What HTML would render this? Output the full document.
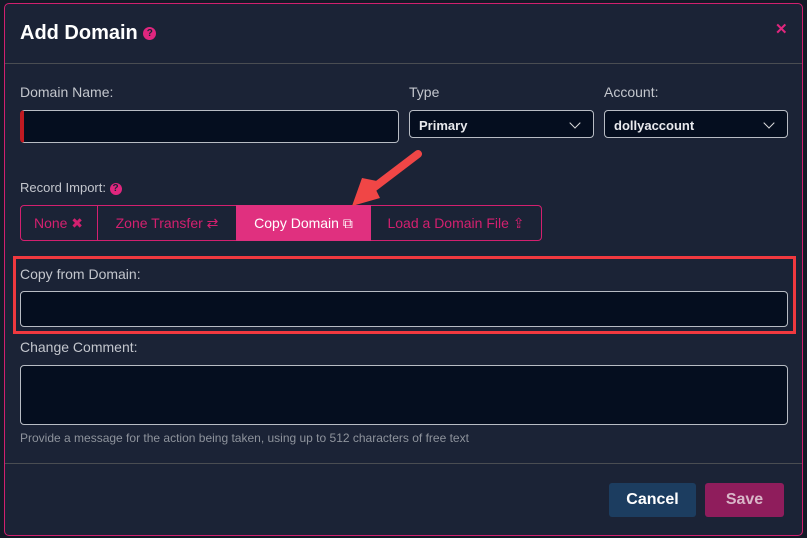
<!DOCTYPE html>
<html><head><style>
*{box-sizing:border-box;margin:0;padding:0}
body{width:807px;height:538px;background:#131a27;font-family:"Liberation Sans",sans-serif;position:relative;overflow:hidden;color:#c9ccd3}
.m{position:absolute;left:4px;top:3px;width:799px;height:533px;background:#1b2336;border:1px solid #d0206f;border-radius:5px}
.a{position:absolute}
.lbl{font-size:14px;color:#c3c6cd}
.inp{background:#050e1f;border:1px solid #b8bcc4;border-radius:4px}
.sel{font-size:13px;font-weight:bold;color:#e8e9ed;padding:7px 0 0 9px}
.chev{position:absolute;right:14px;top:8px;width:8px;height:8px;border-right:1.5px solid #ddd;border-bottom:1.5px solid #ddd;transform:rotate(45deg)}
.q{display:inline-block;width:12px;height:12px;border-radius:50%;background:#e0267e;color:#1b2336;font-size:10px;font-weight:bold;text-align:center;line-height:12px;vertical-align:middle}
.bg{position:absolute;top:205px;height:36px;font-size:14px;color:#d3206f;line-height:36px;text-align:center}
</style></head><body>
<div class="m"></div>
<div class="a" style="left:20px;top:22px;font-size:20px;font-weight:bold;color:#fff">Add Domain <span class="q" style="width:13px;height:13px;line-height:13px">?</span></div>
<div class="a" style="left:775px;top:20px;color:#e0267e;font-size:15px;font-weight:bold">✕</div>
<div class="a" style="left:5px;top:63px;width:797px;height:1px;background:#4a4d52"></div>
<div class="a lbl" style="left:20px;top:84px">Domain Name:</div>
<div class="a lbl" style="left:409px;top:84px">Type</div>
<div class="a lbl" style="left:604px;top:84px">Account:</div>
<div class="a inp" style="left:20px;top:110px;width:379px;height:33px;border-left:4px solid #c01a22"></div>
<div class="a inp sel" style="left:409px;top:110px;width:185px;height:28px">Primary<div class="chev"></div></div>
<div class="a inp sel" style="left:604px;top:110px;width:184px;height:28px">dollyaccount<div class="chev"></div></div>
<div class="a lbl" style="left:20px;top:180px;font-size:13px">Record Import: <span class="q">?</span></div>
<div class="a" style="left:20px;top:205px;width:522px;height:36px;border:1px solid #d3206f;border-radius:4px"></div>
<div class="bg" style="left:20px;width:77px">None ✖</div>
<div class="a" style="left:97px;top:205px;width:1px;height:36px;background:#d3206f"></div>
<div class="bg" style="left:98px;width:138px">Zone Transfer ⇄</div>
<div class="bg" style="left:236px;width:135px;background:#e0307f;color:#fff">Copy Domain ⧉</div>
<div class="bg" style="left:371px;width:170px">Load a Domain File ⇪</div>
<svg class="a" style="left:330px;top:140px" width="110" height="80"><line x1="88" y1="14" x2="38" y2="52" stroke="#f04646" stroke-width="8" stroke-linecap="round"/><polygon points="22,66 52,42 32,38" fill="#f04646"/><polygon points="22,66 50,58 44,46" fill="#f04646"/></svg>
<div class="a" style="left:13px;top:256px;width:783px;height:78px;border:3px solid #f0393f"></div>
<div class="a lbl" style="left:20px;top:266px">Copy from Domain:</div>
<div class="a inp" style="left:20px;top:291px;width:768px;height:36px"></div>
<div class="a lbl" style="left:20px;top:339px">Change Comment:</div>
<div class="a inp" style="left:20px;top:365px;width:768px;height:60px"></div>
<div class="a" style="left:20px;top:431px;font-size:12px;color:#8e939c">Provide a message for the action being taken, using up to 512 characters of free text</div>
<div class="a" style="left:5px;top:463px;width:797px;height:1px;background:#4a4d52"></div>
<div class="a" style="left:609px;top:483px;width:87px;height:34px;background:#1c3d60;border-radius:3px;color:#fff;font-weight:bold;font-size:16px;text-align:center;line-height:34px">Cancel</div>
<div class="a" style="left:705px;top:483px;width:79px;height:34px;background:#8f1d5c;border-radius:3px;color:#d9b6c8;font-weight:bold;font-size:16px;text-align:center;line-height:34px">Save</div>
</body></html>
